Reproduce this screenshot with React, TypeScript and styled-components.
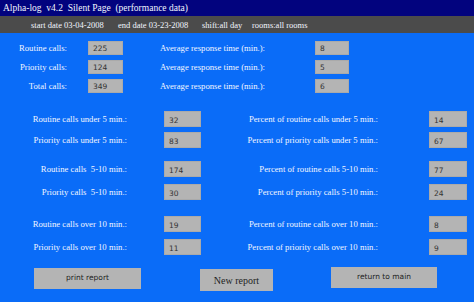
import React from 'react'
import styled, { createGlobalStyle } from 'styled-components'

const GlobalStyle = createGlobalStyle`
  html, body {
    margin: 0;
    padding: 0;
    background: #0a6cf8;
  }
  #root {
    width: 474px;
    height: 302px;
    overflow: hidden;
  }
`

const Page = styled.div`
  width: 474px;
  height: 302px;
  display: flex;
  flex-direction: column;
  background: #0a6cf8;
  font-family: 'Liberation Serif', serif;
  color: #f2f6ff;
`

const TitleBar = styled.div`
  height: 16px;
  background: #02037e;
  display: flex;
  align-items: center;
  padding-left: 3px;
  font-size: 9.5px;
  white-space: pre;
`

const InfoBar = styled.div`
  height: 17px;
  background: #4b4b4b;
  display: flex;
  align-items: center;
  padding-left: 31px;
  font-size: 8.5px;
  white-space: pre;
`

const InfoItem = styled.span<{ w: number }>`
  width: ${({ w }) => w}px;
`

const Section = styled.div<{ top: number; gap: number }>`
  margin-top: ${({ top }) => top}px;
  display: flex;
  flex-direction: column;
  gap: ${({ gap }) => gap}px;
`

const SummaryRow = styled.div`
  display: grid;
  grid-template-columns: 88px 35px 37px 155px 34px;
  height: 14px;
  align-items: center;
`

const StatRow = styled.div`
  display: grid;
  grid-template-columns: 164px 37px 228px 38px;
  height: 16px;
  align-items: center;
`

const Label = styled.div<{ align?: 'left' | 'right'; pr?: number }>`
  font-size: 8.7px;
  white-space: pre;
  text-align: ${({ align }) => align || 'right'};
  padding-right: ${({ pr }) => pr || 0}px;
`

const ValueBox = styled.div`
  height: 100%;
  background: #b4b4b4;
  box-shadow: inset 0 0 0 1px #aaaaaa;
  font-family: 'DejaVu Sans', sans-serif;
  font-size: 7.5px;
  color: #333333;
  display: flex;
  align-items: flex-end;
  padding: 0 0 2px 5px;
  box-sizing: border-box;
`

const ButtonBar = styled.div`
  margin-top: 13px;
  display: flex;
  align-items: flex-start;
  padding-left: 34px;
`

const Button = styled.div<{ w: number; h: number; ml: number; dy?: number; serif?: boolean }>`
  width: ${({ w }) => w}px;
  height: ${({ h }) => h}px;
  margin-left: ${({ ml }) => ml}px;
  margin-top: ${({ dy }) => dy || 0}px;
  background: #b4b4b4;
  color: #1e1e1e;
  display: flex;
  justify-content: center;
  align-items: ${({ serif }) => (serif ? 'center' : 'flex-start')};
  padding-top: ${({ serif }) => (serif ? 0 : 5)}px;
  box-sizing: border-box;
  font-family: ${({ serif }) => (serif ? "'Liberation Serif', serif" : "'DejaVu Sans', sans-serif")};
  font-size: ${({ serif }) => (serif ? 10 : 7.5)}px;
`

const summary = [
  { label: 'Routine calls:', value: '225', avg: '8' },
  { label: 'Priority calls:', value: '124', avg: '5' },
  { label: 'Total calls:', value: '349', avg: '6' }
]

type Stat = { label: string; value: string; pLabel: string; pValue: string }

const groups: { top: number; gap: number; rows: Stat[] }[] = [
  {
    top: 18,
    gap: 5,
    rows: [
      { label: 'Routine calls under 5 min.:', value: '32', pLabel: 'Percent of routine calls under 5 min.:', pValue: '14' },
      { label: 'Priority calls under 5 min.:', value: '83', pLabel: 'Percent of priority calls under 5 min.:', pValue: '67' }
    ]
  },
  {
    top: 13,
    gap: 7,
    rows: [
      { label: 'Routine calls  5-10 min.:', value: '174', pLabel: 'Percent of routine calls 5-10 min.:', pValue: '77' },
      { label: 'Priority calls  5-10 min.:', value: '30', pLabel: 'Percent of priority calls 5-10 min.:', pValue: '24' }
    ]
  },
  {
    top: 16,
    gap: 7,
    rows: [
      { label: 'Routine calls over 10 min.:', value: '19', pLabel: 'Percent of routine calls over 10 min.:', pValue: '8' },
      { label: 'Priority calls over 10 min.:', value: '11', pLabel: 'Percent of priority calls over 10 min.:', pValue: '9' }
    ]
  }
]

export default function App() {
  return (
    <Page>
      <GlobalStyle />
      <TitleBar>Alpha-log  v4.2  Silent Page  (performance data)</TitleBar>
      <InfoBar>
        <InfoItem w={87}>start date 03-04-2008</InfoItem>
        <InfoItem w={84}>end date 03-23-2008</InfoItem>
        <InfoItem w={50}>shift:all day</InfoItem>
        <span>rooms:all rooms</span>
      </InfoBar>

      <Section top={8} gap={5}>
        {summary.map((s) => (
          <SummaryRow key={s.label}>
            <Label pr={21}>{s.label}</Label>
            <ValueBox>{s.value}</ValueBox>
            <span />
            <Label align="left">Average response time (min.):</Label>
            <ValueBox>{s.avg}</ValueBox>
          </SummaryRow>
        ))}
      </Section>

      {groups.map((g, i) => (
        <Section key={i} top={g.top} gap={g.gap}>
          {g.rows.map((r) => (
            <StatRow key={r.label}>
              <Label pr={37}>{r.label}</Label>
              <ValueBox>{r.value}</ValueBox>
              <Label pr={51}>{r.pLabel}</Label>
              <ValueBox>{r.pValue}</ValueBox>
            </StatRow>
          ))}
        </Section>
      ))}

      <ButtonBar>
        <Button w={107} h={21} ml={0}>print report</Button>
        <Button w={73} h={22} ml={59} dy={1} serif>New report</Button>
        <Button w={106} h={21} ml={58} dy={-1}>return to main</Button>
      </ButtonBar>
    </Page>
  )
}
